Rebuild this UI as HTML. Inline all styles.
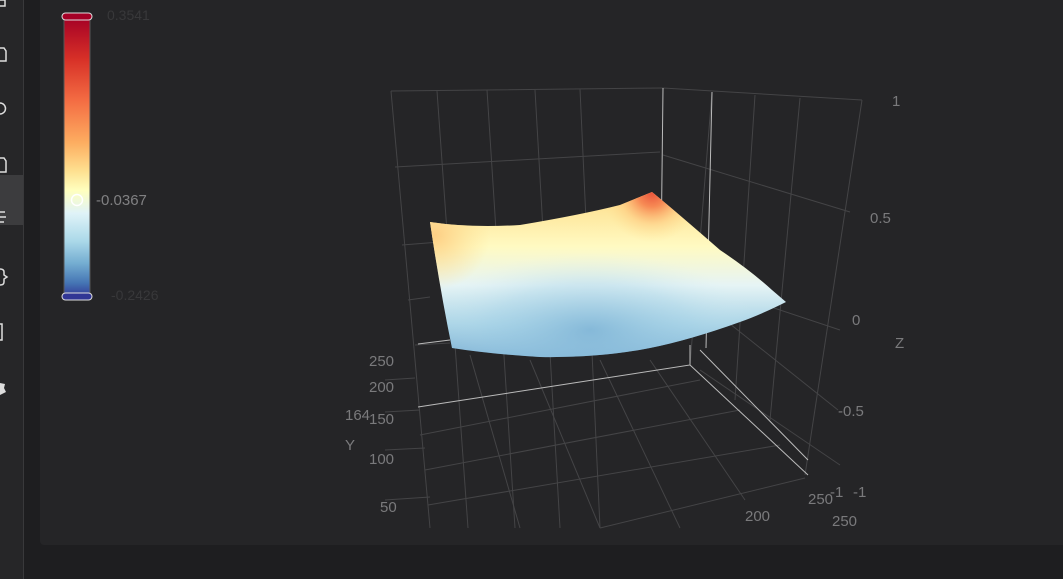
<!DOCTYPE html>
<html><head><meta charset="utf-8"><style>
html,body{margin:0;padding:0;width:1063px;height:579px;overflow:hidden;background:#1e1e20;font-family:"Liberation Sans",sans-serif}
.side{position:absolute;left:0;top:0;width:23px;height:579px;background:#262628;border-right:1px solid #39393b}
.act{position:absolute;left:0;top:175px;width:23px;height:50px;background:#3c3c3e}
.panel{position:absolute;left:40px;top:0;width:1023px;height:545px;background:#252527;border-bottom-left-radius:4px}
svg{position:absolute;left:0;top:0}
</style></head><body>
<div class="side"><div class="act"></div></div>
<div class="panel"></div>
<svg width="1063" height="579" viewBox="0 0 1063 579">
<defs>
<linearGradient id="cb" x1="0" y1="0" x2="0" y2="1">
<stop offset="0" stop-color="#a50026"/><stop offset="0.15" stop-color="#d73027"/><stop offset="0.3" stop-color="#f46d43"/><stop offset="0.45" stop-color="#fdae61"/><stop offset="0.55" stop-color="#fee090"/><stop offset="0.62" stop-color="#ffffbf"/><stop offset="0.7" stop-color="#e0f3f8"/><stop offset="0.8" stop-color="#abd9e9"/><stop offset="0.88" stop-color="#74add1"/><stop offset="0.95" stop-color="#4575b4"/><stop offset="1" stop-color="#313695"/>
</linearGradient>
<linearGradient id="base" gradientUnits="userSpaceOnUse" x1="600" y1="200" x2="600" y2="355">
<stop offset="0" stop-color="#fee090"/><stop offset="0.3" stop-color="#fffac2"/><stop offset="0.55" stop-color="#e6f4f5"/><stop offset="0.8" stop-color="#a8d3e6"/><stop offset="1" stop-color="#78aed3"/>
</linearGradient>
<radialGradient id="blue" gradientUnits="userSpaceOnUse" cx="590" cy="330" r="130" gradientTransform="translate(590 330) scale(1.3 0.6) translate(-590 -330)">
<stop offset="0" stop-color="#7fb4d6" stop-opacity="0.8"/><stop offset="0.6" stop-color="#a9d4e8" stop-opacity="0.4"/><stop offset="1" stop-color="#d8eef3" stop-opacity="0"/>
</radialGradient>
<radialGradient id="red" gradientUnits="userSpaceOnUse" cx="652" cy="192" r="50">
<stop offset="0" stop-color="#e8523a"/><stop offset="0.3" stop-color="#f78b55"/><stop offset="0.65" stop-color="#fdc57a" stop-opacity="0.5"/><stop offset="1" stop-color="#fee090" stop-opacity="0"/>
</radialGradient>
<radialGradient id="lefty" gradientUnits="userSpaceOnUse" cx="435" cy="235" r="55">
<stop offset="0" stop-color="#fdcf85"/><stop offset="1" stop-color="#fee090" stop-opacity="0"/>
</radialGradient>
</defs>
<rect x="64" y="17" width="26" height="280" fill="url(#cb)" stroke="#555" stroke-width="1"/>
<rect x="62" y="13" width="30" height="7" rx="3.5" fill="#a50026" stroke="#ddd" stroke-width="1"/>
<rect x="62" y="293" width="30" height="7" rx="3.5" fill="#313695" stroke="#ddd" stroke-width="1"/>
<circle cx="77" cy="200" r="5.5" fill="none" stroke="#fff" stroke-width="1.5"/>
<g font-size="14" fill="#38383a"><text x="107" y="20">0.3541</text><text x="111" y="300">-0.2426</text></g>
<text x="96" y="205" font-size="15" fill="#808082">-0.0367</text>
<g stroke="#444446" stroke-width="1" fill="none">
<path d="M391 91 L663 88 M391 91 L430 528 M437 91 L468 528 M487 90 L515 528 M535 90 L560 528 M580 89 L600 528"/>
<path d="M395 167 L660 152 M402 245 L465 240 M408 300 L430 297 M415 345 L450 343"/>
<path d="M663 88 L862 100 M862 100 L805 475 M663 155 L850 212 M712 92 L690 365 M755 95 L735 400 M800 98 L770 420"/>
<path d="M690 280 L840 330 M700 300 L838 410 M700 370 L840 465"/>
<path d="M420 435 L700 380 M425 470 L740 410 M428 505 L780 445 M600 528 L805 478"/>
<path d="M470 355 L520 528 M530 360 L600 528 M600 360 L680 528 M650 360 L745 500"/>
<path d="M385 380 L415 378 M385 412 L420 410 M385 450 L425 448 M385 500 L430 497"/>
</g>
<g stroke="#bbb" stroke-width="1" fill="none">
<path d="M663 88 L660 345 M712 92 L706 348 M418 407 L690 365 L690 345 M690 365 L808 475 M700 350 L808 460 M418 344 L450 340"/>
</g>
<path d="M430 222 Q470 228 520 225 Q580 215 620 205 L652 192 Q680 215 720 250 Q750 270 772 290 L786 302 Q760 315 740 322 Q690 340 650 348 Q600 358 540 357 Q490 354 452 348 Q440 290 430 222 Z" fill="url(#base)"/>
<path d="M430 222 Q470 228 520 225 Q580 215 620 205 L652 192 Q680 215 720 250 Q750 270 772 290 L786 302 Q760 315 740 322 Q690 340 650 348 Q600 358 540 357 Q490 354 452 348 Q440 290 430 222 Z" fill="url(#blue)"/>
<path d="M430 222 Q470 228 520 225 Q580 215 620 205 L652 192 Q680 215 720 250 Q750 270 772 290 L786 302 Q760 315 740 322 Q690 340 650 348 Q600 358 540 357 Q490 354 452 348 Q440 290 430 222 Z" fill="url(#red)"/>
<path d="M430 222 Q470 228 520 225 Q580 215 620 205 L652 192 Q680 215 720 250 Q750 270 772 290 L786 302 Q760 315 740 322 Q690 340 650 348 Q600 358 540 357 Q490 354 452 348 Q440 290 430 222 Z" fill="url(#lefty)"/>
<g font-size="15" fill="#7a7a7c">
<text x="892" y="106">1</text><text x="870" y="223">0.5</text><text x="852" y="325">0</text><text x="895" y="348">Z</text>
<text x="838" y="416">-0.5</text><text x="830" y="497">-1</text><text x="853" y="497">-1</text>
<text x="808" y="504">250</text><text x="832" y="526">250</text><text x="745" y="521">200</text>
<text x="369" y="366">250</text><text x="369" y="392">200</text><text x="369" y="424">150</text><text x="345" y="420">164</text>
<text x="345" y="450">Y</text><text x="369" y="464">100</text><text x="380" y="512">50</text>
</g>
<g stroke="#ddd" stroke-width="1.5" fill="none">
<path d="M0 0 L5 0 L5 6 L0 6 M0 48 L4 48 L6 51 L6 61 L0 61 M0 103 A5 5 0 0 1 0 114 M0 158 L4 158 L6 161 L6 172 L0 172 M0 212 L5 212 M0 217 L6 217 M0 222 L4 222 M0 269 Q4 269 4 272 L4 275 L7 277 L4 279 L4 282 Q4 285 0 285 M0 324 L2 324 L2 340 L0 340"/>
</g>
<path d="M0 383 L5 384 L4 388 L6 392 L0 395 Z" fill="#ddd"/>
</svg>
</body></html>
